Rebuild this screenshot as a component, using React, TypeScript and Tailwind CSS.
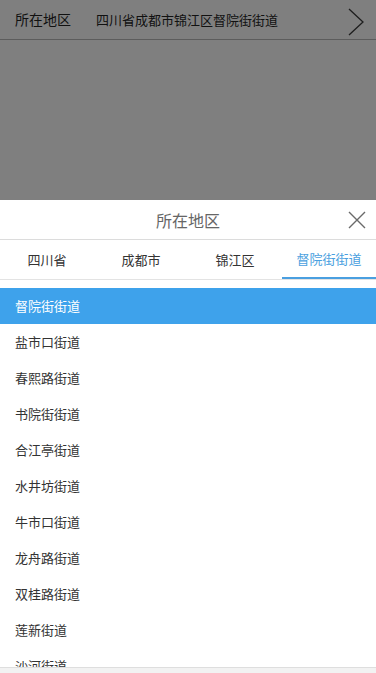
const tabs = ['四川省', '成都市', '锦江区', '督院街街道'];

const streets = [
  '督院街街道',
  '盐市口街道',
  '春熙路街道',
  '书院街街道',
  '合江亭街道',
  '水井坊街道',
  '牛市口街道',
  '龙舟路街道',
  '双桂路街道',
  '莲新街道',
  '沙河街道',
];

export default function App() {
  const font = { fontFamily: '"Noto Sans CJK SC", "Noto Sans", sans-serif' };
  return (
    <div className="flex h-[673px] w-[376px] flex-col overflow-hidden bg-[#7f7f7f]" style={font}>
      {/* page header under the mask */}
      <div className="flex h-[40px] items-center border-b border-[#5c5c5c] pl-[15px] pr-[11px]">
        <span className="w-[81px] text-[14px] text-[#111]">所在地区</span>
        <span className="flex-1 text-[13px] text-[#111]">四川省成都市锦江区督院街街道</span>
        <svg width="18" height="28" viewBox="0 0 18 28" className="mt-[4px]">
          <polyline points="2,1 16,14 2,27" fill="none" stroke="#1e1e1e" strokeWidth="1.3" />
        </svg>
      </div>
      <div className="h-[160px]" />

      {/* bottom sheet */}
      <div className="flex flex-1 flex-col overflow-hidden bg-white">
        <div className="relative flex h-[40px] items-center justify-center border-b border-[#dcdcdc]">
          <span className="text-[16px] text-[#666]">所在地区</span>
          <svg width="18" height="18" viewBox="0 0 18 18" className="absolute right-[10px] top-[11px]">
            <path d="M1 1 L17 17 M17 1 L1 17" stroke="#6a6a6a" strokeWidth="1.4" />
          </svg>
        </div>
        <div className="grid h-[40px] grid-cols-4 border-b border-[#e3e3e3]">
          {tabs.map((t, i) => (
            <div
              key={t}
              className={
                i === 3
                  ? 'flex items-center justify-center border-b-2 border-[#4a9fe0] text-[13px] text-[#4a9fe0]'
                  : 'flex items-center justify-center text-[13px] text-[#333]'
              }
            >
              {t}
            </div>
          ))}
        </div>
        <div className="flex-1 overflow-hidden pt-[8px]">
          {streets.map((s, i) => (
            <div
              key={s}
              className={
                i === 0
                  ? 'flex h-[36px] items-center bg-[#3ea2eb] pl-[15px] text-[13px] text-white'
                  : 'flex h-[36px] items-center pl-[15px] text-[13px] text-[#333]'
              }
            >
              {s}
            </div>
          ))}
        </div>
        <div className="h-[6px] border-t border-[#dedede] bg-[#f2f2f2]" />
      </div>
    </div>
  );
}
